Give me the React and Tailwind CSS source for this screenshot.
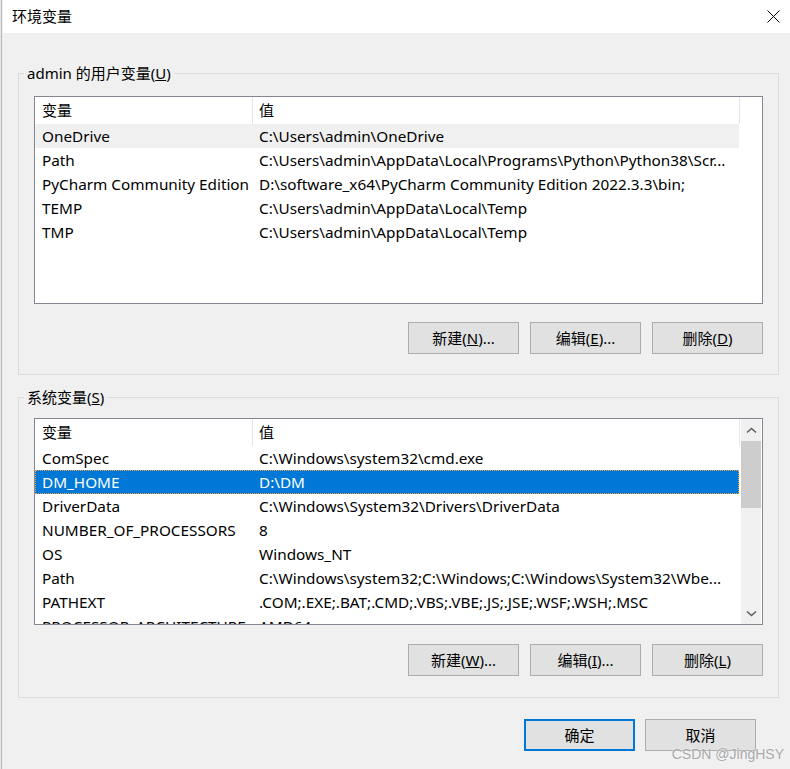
import React from "react";

const userVars = [
  ["OneDrive", "C:\\Users\\admin\\OneDrive"],
  ["Path", "C:\\Users\\admin\\AppData\\Local\\Programs\\Python\\Python38\\Scr..."],
  ["PyCharm Community Edition", "D:\\software_x64\\PyCharm Community Edition 2022.3.3\\bin;"],
  ["TEMP", "C:\\Users\\admin\\AppData\\Local\\Temp"],
  ["TMP", "C:\\Users\\admin\\AppData\\Local\\Temp"],
];

const sysVars = [
  ["ComSpec", "C:\\Windows\\system32\\cmd.exe"],
  ["DM_HOME", "D:\\DM"],
  ["DriverData", "C:\\Windows\\System32\\Drivers\\DriverData"],
  ["NUMBER_OF_PROCESSORS", "8"],
  ["OS", "Windows_NT"],
  ["Path", "C:\\Windows\\system32;C:\\Windows;C:\\Windows\\System32\\Wbe..."],
  ["PATHEXT", ".COM;.EXE;.BAT;.CMD;.VBS;.VBE;.JS;.JSE;.WSF;.WSH;.MSC"],
  ["PROCESSOR_ARCHITECTURE", "AMD64"],
];

function Btn({ children, primary }) {
  return (
    <button
      className={
        "w-[111px] h-[32px] flex items-center justify-center bg-[#e1e1e1] text-black text-[15px] leading-none " +
        (primary ? "border-2 border-[#0078d7]" : "border border-[#adadad]")
      }
    >
      {children}
    </button>
  );
}

function Header() {
  return (
    <div className="flex h-[27px] w-[705px] bg-white shrink-0">
      <div className="w-[218px] border-r border-[#e5e5e5] pl-[7px] flex items-center">变量</div>
      <div className="flex-1 border-r border-[#e5e5e5] pl-[6px] flex items-center">值</div>
    </div>
  );
}

function Row({ name, value, state }) {
  const cls =
    state === "sel"
      ? "bg-[#0078d7] text-white border border-dotted border-[#f0a050]"
      : state === "hover"
      ? "bg-[#f0f0f0] text-black border border-transparent"
      : "text-black border border-transparent";
  return (
    <div className={"flex h-[24px] w-[704px] items-center pt-[1px] shrink-0 text-[15.3px] " + cls}>
      <div className="w-[217px] pl-[6px] whitespace-nowrap overflow-hidden">{name}</div>
      <div className="flex-1 pl-[6px] whitespace-nowrap overflow-hidden">{value}</div>
    </div>
  );
}

function Chevron({ down }) {
  return (
    <svg width="11" height="7" viewBox="0 0 11 7">
      <path
        d={down ? "M1 1.5 L5.5 5.5 L10 1.5" : "M1 5.5 L5.5 1.5 L10 5.5"}
        fill="none"
        stroke="#606060"
        strokeWidth="1.6"
      />
    </svg>
  );
}

function GroupBox({ label, children, className }) {
  return (
    <div className={"relative border border-[#dcdcdc] px-[15px] " + className}>
      <span className="absolute -top-[11px] left-[5px] px-[3px] bg-[#f0f0f0] leading-[20px] text-black">
        {label}
      </span>
      {children}
    </div>
  );
}

export default function App() {
  return (
    <div className="w-[790px] h-[769px] bg-[#f0f0f0] flex overflow-hidden relative text-[15px] font-['Noto_Sans','Noto_Sans_CJK_SC',sans-serif]">
      <div className="w-[3px] h-full flex shrink-0">
        <div className="w-[1px] bg-[#e8e8e8]" />
        <div className="w-[1px] bg-[#b8b8b8]" />
        <div className="w-[1px] bg-[#f0f0f0]" />
      </div>
      <div className="flex-1 flex flex-col">
        <div className="h-[33px] bg-white flex items-center justify-between pl-[9px] pr-[10px] shrink-0">
          <span className="text-black">环境变量</span>
          <svg width="13" height="13" viewBox="0 0 13 13">
            <path d="M0.5 0.5 L12.5 12.5 M12.5 0.5 L0.5 12.5" stroke="#000" strokeWidth="1" fill="none" />
          </svg>
        </div>
        <div className="pl-[15px] pr-[11px] pt-[40px] flex flex-col">
          <GroupBox
            label={
              <>
                admin 的用户变量(<u>U</u>)
              </>
            }
            className="pt-[22px] pb-[20px]"
          >
            <div className="h-[208px] border border-[#828790] bg-white flex flex-col overflow-hidden">
              <Header />
              {userVars.map(([n, v], i) => (
                <Row key={n} name={n} value={v} state={i === 0 ? "hover" : ""} />
              ))}
            </div>
            <div className="flex justify-end gap-[11px] mt-[18px]">
              <Btn>
                新建(<u>N</u>)...
              </Btn>
              <Btn>
                编辑(<u>E</u>)...
              </Btn>
              <Btn>
                删除(<u>D</u>)
              </Btn>
            </div>
          </GroupBox>

          <GroupBox
            label={
              <>
                系统变量(<u>S</u>)
              </>
            }
            className="mt-[22px] pt-[20px] pb-[21px]"
          >
            <div className="h-[207px] border border-[#828790] bg-white flex overflow-hidden">
              <div className="flex flex-col w-[705px] overflow-hidden">
                <Header />
                {sysVars.map(([n, v], i) => (
                  <Row key={n} name={n} value={v} state={i === 1 ? "sel" : ""} />
                ))}
              </div>
              <div className="flex-1 flex justify-center">
                <div className="w-[20px] h-full bg-[#f0f0f0] flex flex-col items-center">
                  <div className="h-[22px] flex items-center justify-center shrink-0">
                    <Chevron />
                  </div>
                  <div className="w-full h-[67px] bg-[#cdcdcd] shrink-0" />
                  <div className="flex-1" />
                  <div className="h-[22px] flex items-center justify-center shrink-0">
                    <Chevron down />
                  </div>
                </div>
              </div>
            </div>
            <div className="flex justify-end gap-[11px] mt-[19px]">
              <Btn>
                新建(<u>W</u>)...
              </Btn>
              <Btn>
                编辑(<u>I</u>)...
              </Btn>
              <Btn>
                删除(<u>L</u>)
              </Btn>
            </div>
          </GroupBox>

          <div className="flex justify-end gap-[10px] mt-[21px] mr-[23px]">
            <Btn primary>确定</Btn>
            <Btn>取消</Btn>
          </div>
        </div>
      </div>
      <span className="absolute right-[6px] bottom-[8px] text-[14px] leading-none text-[#a8a8a8] font-['Liberation_Sans',sans-serif] [text-shadow:0_0_2px_#ffffff]">
        CSDN @JingHSY
      </span>
    </div>
  );
}
